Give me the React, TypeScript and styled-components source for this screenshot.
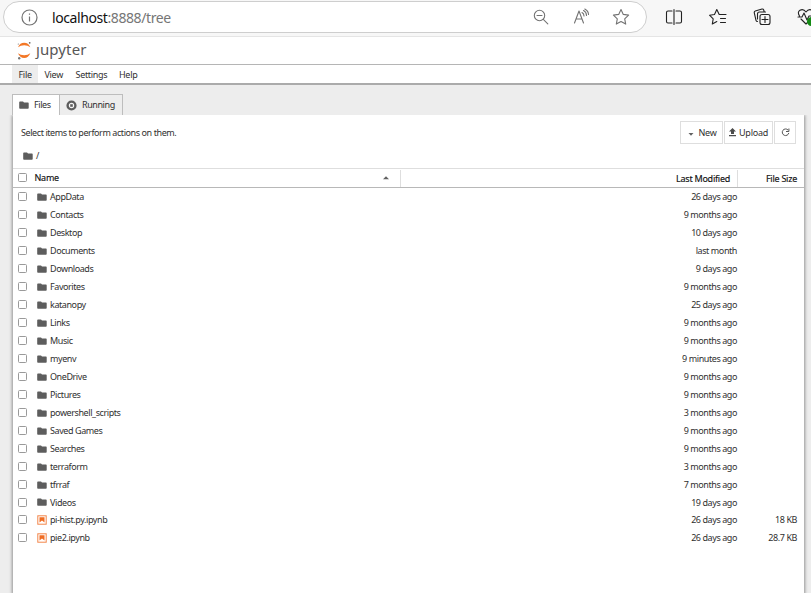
import React from 'react';
import styled, { createGlobalStyle } from 'styled-components';

const Global = createGlobalStyle`
  * { box-sizing: border-box; }
  body { margin: 0; background: #ededed; overflow: hidden; }
`;

const Page = styled.div`
  width: 811px;
  height: 593px;
  display: flex;
  flex-direction: column;
  overflow: hidden;
  background: #ededed;
  color: #303030;
  font: 9px/18px "Noto Sans", sans-serif;
  letter-spacing: -0.42px;
  white-space: nowrap;
  svg { display: block; flex: none; }
`;

const BrowserBar = styled.div`
  height: 37px;
  flex: none;
  display: flex;
  align-items: flex-start;
  padding: 1px 0 0 3px;
  background: #f7f7f7;
  border-bottom: 1px solid #e5e5e5;
`;

const AddressBar = styled.div`
  width: 644px;
  height: 32px;
  flex: none;
  display: flex;
  align-items: center;
  padding: 0 15px 0 17px;
  border: 1px solid #cecece;
  border-radius: 16px;
  background: #fff;
`;

const Url = styled.div`
  flex: 1;
  margin-left: 14px;
  padding-top: 1px;
  color: #767676;
  font-size: 14px;
  letter-spacing: -0.41px;
  b { color: #111; font-weight: 400; }
`;

const AddressActions = styled.div`
  display: flex;
  gap: 20px;
`;

const BrowserActions = styled.div`
  display: flex;
  gap: 24px;
  padding: 6px 0 0 17px;
`;

const Brand = styled.header`
  height: 28px;
  flex: none;
  display: flex;
  align-items: flex-start;
  padding: 4px 0 0 17px;
  background: #fff;
  border-bottom: 1px solid #b5b5b5;
`;

const Wordmark = styled.span`
  margin-left: 5px;
  color: #575757;
  font-size: 15px;
  line-height: 16px;
  letter-spacing: 0.1px;
`;

const MenuBar = styled.nav`
  height: 20px;
  flex: none;
  display: flex;
  padding-left: 12px;
  background: #fff;
  border-bottom: 2px solid #ababab;
  letter-spacing: -0.3px;
`;

const MenuItem = styled.span<{ $w: number; $active?: boolean }>`
  width: ${p => p.$w}px;
  padding-left: 6.5px;
  line-height: 19px;
  background: ${p => (p.$active ? '#ededed' : 'transparent')};
`;

const Tabs = styled.div`
  flex: none;
  display: flex;
  height: 30px;
  padding: 9px 0 0 12px;
`;

const Tab = styled.div<{ $w: number; $active?: boolean }>`
  width: ${p => p.$w}px;
  display: flex;
  align-items: center;
  gap: 5px;
  padding-left: 6px;
  border: 1px solid #bdbdbd;
  border-bottom: 0;
  margin-right: -1px;
  background: ${p => (p.$active ? '#fff' : '#ededed')};
`;

const Panel = styled.main`
  flex: 1;
  width: 791px;
  margin-left: 13px;
  display: flex;
  flex-direction: column;
  background: #fff;
  box-shadow: 0 1px 3px 1px rgba(0, 0, 0, 0.38);
  clip-path: inset(0 -8px -8px -8px);
`;

const Toolbar = styled.div`
  display: flex;
  justify-content: space-between;
  height: 35px;
  padding: 6px 8px 0;
`;

const Hint = styled.span`
  padding-top: 3px;
`;

const Buttons = styled.div`
  display: flex;
  gap: 1px;
  letter-spacing: -0.25px;
`;

const Button = styled.button<{ $w: number }>`
  width: ${p => p.$w}px;
  height: 23px;
  display: flex;
  align-items: center;
  justify-content: center;
  gap: 3px;
  padding: 0;
  border: 1px solid #dedede;
  background: #fff;
  color: inherit;
  font: inherit;
  letter-spacing: inherit;
`;

const Caret = styled.span`
  padding: 2px 1px 0 2px;
`;

const Crumbs = styled.div`
  display: flex;
  align-items: center;
  gap: 3px;
  height: 18px;
  padding: 0 0 0 10px;
  margin-top: -3px;
`;

const HeaderRow = styled.div`
  height: 20px;
  margin-top: 3px;
  display: flex;
  align-items: center;
  padding-left: 5px;
  border-top: 1px solid #dedede;
  border-bottom: 1px solid #b8b8b8;
  color: #111;
  letter-spacing: -0.25px;
  -webkit-text-stroke: 0.15px #111;
`;

const NameHeading = styled.div`
  width: 373px;
  height: 18px;
  display: flex;
  align-items: center;
  justify-content: space-between;
  padding: 0 11px 0 7.5px;
`;

const ModifiedHeading = styled.div`
  width: 338px;
  height: 17px;
  padding-right: 7px;
  border: solid #dedede;
  border-width: 0 1px;
  text-align: right;
  line-height: 18px;
`;

const SizeHeading = styled.div`
  flex: 1;
  padding-right: 7px;
  text-align: right;
  line-height: 18px;
  padding-top: 1px;
`;

const Row = styled.div<{ $short?: boolean }>`
  height: ${p => (p.$short ? 17 : 18)}px;
  display: flex;
  align-items: center;
  padding: 0 7px 0 5px;
`;

const Check = styled.span`
  width: 9px;
  height: 9px;
  flex: none;
  margin-top: -1px;
  border: 1px solid #9a9a9a;
  border-radius: 1.5px;
  background: #fff;
`;

const ItemIcon = styled.span`
  margin: 0 3.5px 0 9.5px;
`;

const ItemName = styled.span`
  flex: 1;
`;

const Modified = styled.span`
  width: 100px;
  text-align: right;
`;

const Size = styled.span`
  width: 60px;
  text-align: right;
`;

const Folder = () => (
  <svg width="10" height="9" viewBox="0 0 10 9" fill="#5d5d5d">
    <path d="M1 .5h3l1 1h4q.7 0 .7.7V7q0 .8-.8.8H1Q.2 7.800.2 7V1.300Q.2.500 1 .5z" />
  </svg>
);

const Notebook = () => (
  <svg width="10" height="10" viewBox="0 0 10 10">
    <rect x=".8" y=".8" width="8.400" height="8.400" fill="#fff" stroke="#f3864a" />
    <path d="M2.500 2.300h5v5.200L5 5.500 2.500 7.500z" fill="#ef6c22" />
  </svg>
);

const Line = ({ w = 20, color = '#737373', children }: { w?: number; color?: string; children: React.ReactNode }) => (
  <svg width={w} height="20" viewBox={`0 0 ${w} 20`} fill="none" stroke={color} strokeWidth="1.1" strokeLinecap="round" strokeLinejoin="round">
    {children}
  </svg>
);

const star = 'M10 2.500l2.300 4.900 5.300.7-3.900 3.700 1 5.300L10 14.500l-4.700 2.600 1-5.300-3.900-3.700 5.300-.7z';

const folders: [string, string][] = [
  ['AppData', '26 days ago'], ['Contacts', '9 months ago'], ['Desktop', '10 days ago'],
  ['Documents', 'last month'], ['Downloads', '9 days ago'], ['Favorites', '9 months ago'],
  ['katanopy', '25 days ago'], ['Links', '9 months ago'], ['Music', '9 months ago'],
  ['myenv', '9 minutes ago'], ['OneDrive', '9 months ago'], ['Pictures', '9 months ago'],
  ['powershell_scripts', '3 months ago'], ['Saved Games', '9 months ago'], ['Searches', '9 months ago'],
  ['terraform', '3 months ago'], ['tfrraf', '7 months ago'], ['Videos', '19 days ago'],
];
const notebooks: [string, string, string][] = [
  ['pi-hist.py.ipynb', '26 days ago', '18 KB'],
  ['pie2.ipynb', '26 days ago', '28.7 KB'],
];

export default function App() {
  return (
    <Page>
      <Global />
      <BrowserBar>
        <AddressBar>
          <svg width="17" height="17" viewBox="0 0 17 17" fill="none" stroke="#737373" strokeWidth="1.200">
            <circle cx="8.500" cy="8.500" r="7.500" />
            <path d="M8.500 7.500v5M8.500 4.500v1.300" />
          </svg>
          <Url><b>localhost</b>:8888/tree</Url>
          <AddressActions>
            <Line><circle cx="8.500" cy="8.500" r="5.200" /><path d="M12.300 12.300l4.500 4.500M6 8.500h5" /></Line>
            <Line><path d="M3.500 16L8 4 12.500 16M5 12h6M11 5.500q2 1 2 3.500M12.500 3.500q3 1.500 3 5M13.800 2q3.700 2 3.700 5.500" /></Line>
            <Line><path d={star} /></Line>
          </AddressActions>
        </AddressBar>
        <BrowserActions>
          <Line color="#222"><path d="M8 4H4q-1.500 0-1.500 1.500v9Q2.500 16 4 16h4M12 4h4q1.500 0 1.500 1.500v9q0 1.500-1.500 1.500h-4M10 2.500v15" /></Line>
          <Line color="#222"><path d="M12 7.500h-.8L8.800 2.500 6.500 7.500l-5 .7 3.700 3.600-.9 5.200 4.500-2.400M12 7.500h6M12.500 11.500h5M12.500 15.500h5" /></Line>
          <Line color="#222"><rect x="8" y="7.500" width="10" height="10" rx="2" /><path d="M13 9.500v6M10 12.500h6M5.500 14.500q-1.200 0-1.500-1.200L2.300 5.800Q2 4.500 3.300 4L10 2q1.300-.3 1.700 1l.6 2M5.500 12V7q0-2 2-2h6" /></Line>
          <Line color="#222">
            <path d="M3.500 9Q1 5 4 3.200 7.500 1.500 10 5q2.500-3.500 6-1.800 3 2 0 6M2 10h4l2-4 3 7 2-4h3M5 12l5 5 4-4" />
            <circle cx="15.500" cy="14.500" r="4.500" fill="#138a13" stroke="none" />
          </Line>
        </BrowserActions>
      </BrowserBar>
      <Brand>
        <svg width="14" height="19" viewBox="0 0 14 19">
          <path d="M1 6.200Q3 1.800 7.200 1.800T13.300 6.200Q10.800 4.200 7.200 4.200T1 6.200zM1 12.200Q3.500 14.300 7.200 14.300t6.100-2.100Q11.500 16.900 7.200 16.900T1 12.200z" fill="#f37726" />
          <circle cx="12.700" cy="1.800" r=".9" fill="#666" /><circle cx="2.200" cy="17.200" r="1.200" fill="#777" /><circle cx="1.300" cy="3" r=".6" fill="#777" />
        </svg>
        <Wordmark>ȷupyter</Wordmark>
      </Brand>
      <MenuBar>
        <MenuItem $w={26} $active>File</MenuItem>
        <MenuItem $w={31}>View</MenuItem>
        <MenuItem $w={43.5}>Settings</MenuItem>
        <MenuItem $w={40}>Help</MenuItem>
      </MenuBar>
      <Tabs>
        <Tab $w={48} $active><Folder />Files</Tab>
        <Tab $w={64}>
          <svg width="11" height="11" viewBox="0 0 11 11"><circle cx="5.500" cy="5.500" r="3.900" fill="#f6f6f6" stroke="#5d5d5d" strokeWidth="2.400" /><rect x="4.200" y="4.200" width="2.600" height="2.600" fill="#5d5d5d" /></svg>
          Running
        </Tab>
      </Tabs>
      <Panel>
        <Toolbar>
          <Hint>Select items to perform actions on them.</Hint>
          <Buttons>
            <Button $w={43}><Caret><svg width="6" height="4" viewBox="0 0 6 4" fill="#616161"><path d="M.5 1h5L3 3.700z" /></svg></Caret>New</Button>
            <Button $w={49}>
              <svg width="7" height="9" viewBox="0 0 7 9" fill="#4c4c4c"><path d="M3.500 0L7 3.500H5V6H2V3.500H0zM0 7h7v1.200H0z" /></svg>
              Upload
            </Button>
            <Button $w={22}><svg width="9" height="9" viewBox="0 0 9 9" fill="none" stroke="#555"><path d="M7 2A3.300 3.300 0 1 0 7.800 5M7.900.5v3H5" /></svg></Button>
          </Buttons>
        </Toolbar>
        <Crumbs><Folder />/</Crumbs>
        <HeaderRow>
          <Check />
          <NameHeading>Name<svg width="6" height="4" viewBox="0 0 6 4" fill="#616161"><path d="M0 3.300h6L3 .3z" /></svg></NameHeading>
          <ModifiedHeading>Last Modified</ModifiedHeading>
          <SizeHeading>File Size</SizeHeading>
        </HeaderRow>
        {folders.map(([name, date]) => (
          <Row key={name} $short={name === 'Videos'}>
            <Check /><ItemIcon><Folder /></ItemIcon><ItemName>{name}</ItemName><Modified>{date}</Modified><Size />
          </Row>
        ))}
        {notebooks.map(([name, date, size]) => (
          <Row key={name}>
            <Check /><ItemIcon><Notebook /></ItemIcon><ItemName>{name}</ItemName><Modified>{date}</Modified><Size>{size}</Size>
          </Row>
        ))}
      </Panel>
    </Page>
  );
}
